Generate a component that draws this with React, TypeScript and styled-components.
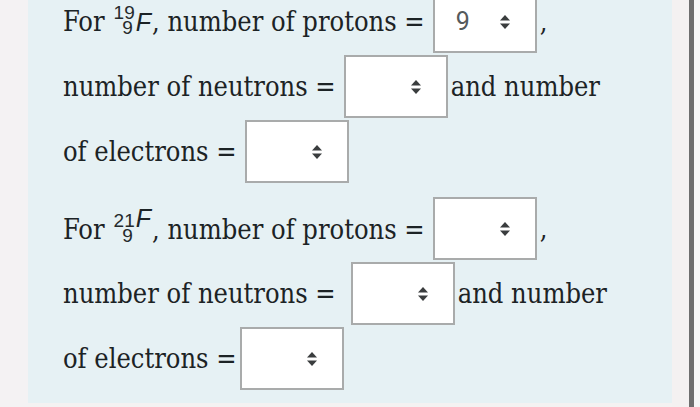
import React from 'react';
import styled, { createGlobalStyle } from 'styled-components';

const GlobalStyle = createGlobalStyle`
  html, body {
    margin: 0;
    padding: 0;
    background: #f4f2f2;
    overflow: hidden;
  }
`;

const Page = styled.div`
  display: flex;
  width: 700px;
  height: 407px;
  overflow: hidden;
  background: #f4f2f2;
`;

const Gutter = styled.div<{ $width: number; $color: string }>`
  flex: 0 0 ${props => props.$width}px;
  background: ${props => props.$color};
`;

const Column = styled.div`
  flex: 0 0 644px;
  display: flex;
  flex-direction: column;
`;

const Panel = styled.div`
  margin-top: -11px;
  padding: 0 0 12px 35px;
  background: #e6f1f4;
  color: #1c2325;
  font-family: "DejaVu Serif", "Liberation Serif", serif;
  font-stretch: condensed;
  font-size: 27px;
`;

const Question = styled.div`
  display: flex;
  flex-direction: column;

  & + & {
    margin-top: 12px;
  }
`;

const Line = styled.div`
  display: flex;
  align-items: center;
  height: 65px;
  white-space: nowrap;
`;

const Text = styled.span`
  line-height: 32px;
`;

const Nuclide = styled.span`
  display: inline-block;
  margin-left: 9px;
  font-family: "Liberation Sans", Arial, sans-serif;
  font-stretch: normal;
  line-height: 15px;
`;

const Stack = styled.span`
  display: inline-block;
  text-align: right;
  vertical-align: -3px;
  font-size: 19px;
  line-height: 15px;
  color: #252a2c;

  & > span {
    display: block;
  }

  & > span + span {
    margin-right: 2px;
  }
`;

const Symbol = styled.span<{ $raised?: boolean }>`
  font-style: italic;
  font-size: 25px;
  margin-left: 1px;
  margin-right: 1px;
  vertical-align: ${props => (props.$raised ? '12px' : '0')};
`;

const Select = styled.div<{ $gap?: number }>`
  box-sizing: border-box;
  display: flex;
  align-items: center;
  flex: 0 0 104px;
  height: 63px;
  margin: 0 3px 0 ${props => props.$gap ?? 8}px;
  padding: 0 24px 0 21px;
  background: #ffffff;
  border: 2px solid #a9abab;
  font-family: Roboto, "Liberation Sans", sans-serif;
  font-stretch: normal;
  font-size: 25px;
  color: #555a5c;
`;

const Arrows = styled.svg`
  margin-left: auto;
  flex: 0 0 auto;
`;

const SelectBox: React.FC<{ value?: string; gap?: number }> = ({ value, gap }) => (
  <Select $gap={gap}>
    {value}
    <Arrows width="12" height="16" viewBox="0 0 12 16">
      <path d="M6 1 L11 6.5 H1 Z" fill="#3a3d3e" />
      <path d="M1 9.5 H11 L6 15 Z" fill="#3a3d3e" />
    </Arrows>
  </Select>
);

const Isotope: React.FC<{ mass: string; raised?: boolean }> = ({ mass, raised }) => (
  <Nuclide>
    <Stack>
      <span>{mass}</span>
      <span>9</span>
    </Stack>
    <Symbol $raised={raised}>F</Symbol>
  </Nuclide>
);

const FluorineQuestion: React.FC<{
  mass: string;
  protons?: string;
  raised?: boolean;
  gaps: [number, number, number];
}> = ({ mass, protons, raised, gaps }) => (
  <Question>
    <Line>
      <Text>
        For
        <Isotope mass={mass} raised={raised} />, number of protons =
      </Text>
      <SelectBox value={protons} gap={gaps[0]} />
      <Text>,</Text>
    </Line>
    <Line>
      <Text>number of neutrons =</Text>
      <SelectBox gap={gaps[1]} />
      <Text>and number</Text>
    </Line>
    <Line>
      <Text>of electrons =</Text>
      <SelectBox gap={gaps[2]} />
    </Line>
  </Question>
);

export default function App() {
  return (
    <Page>
      <GlobalStyle />
      <Gutter $width={28} $color="#f4f2f3" />
      <Column>
        <Panel>
          <FluorineQuestion mass="19" protons="9" gaps={[8, 8, 8]} />
          <FluorineQuestion mass="21" raised gaps={[8, 15, 3]} />
        </Panel>
      </Column>
      <Gutter $width={17} $color="#f4f1f1" />
      <Gutter $width={5} $color="#6e6e6e" />
      <Gutter $width={6} $color="#f7f7f7" />
    </Page>
  );
}
